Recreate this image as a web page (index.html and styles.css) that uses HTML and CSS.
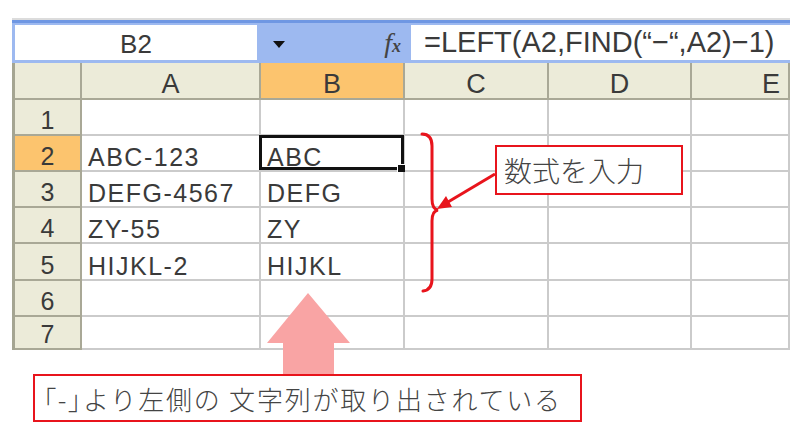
FILE: index.html
```html
<!DOCTYPE html>
<html lang="ja">
<head>
    <meta charset="UTF-8">
    <title>LEFT と FIND</title>
    <link rel="stylesheet" href="styles.css">
</head>
<body>

<div class="page">
    <div class="sheet">
        <div class="formula-bar">
            <div class="name-box">B2</div>
            <div class="bar-tools">
                <span class="drop"></span>
                <span class="fx">f<small>x</small></span>
            </div>
            <div class="formula">=LEFT(A2,FIND(“−“,A2)−1)</div>
        </div>

        <div class="grid">
            <div class="hd corner"></div>
            <div class="hd col">A</div>
            <div class="hd col sel">B</div>
            <div class="hd col">C</div>
            <div class="hd col">D</div>
            <div class="hd col e">E</div>

            <div class="hd row">1</div>
            <div class="cell"></div><div class="cell"></div><div class="cell"></div><div class="cell"></div><div class="cell"></div>

            <div class="hd row sel">2</div>
            <div class="cell">ABC-123</div>
            <div class="cell active">ABC<span class="handle"></span></div>
            <div class="cell"></div><div class="cell"></div><div class="cell"></div>

            <div class="hd row">3</div>
            <div class="cell">DEFG-4567</div>
            <div class="cell">DEFG</div>
            <div class="cell"></div><div class="cell"></div><div class="cell"></div>

            <div class="hd row">4</div>
            <div class="cell">ZY-55</div>
            <div class="cell">ZY</div>
            <div class="cell"></div><div class="cell"></div><div class="cell"></div>

            <div class="hd row">5</div>
            <div class="cell">HIJKL-2</div>
            <div class="cell">HIJKL</div>
            <div class="cell"></div><div class="cell"></div><div class="cell"></div>

            <div class="hd row">6</div>
            <div class="cell"></div><div class="cell"></div><div class="cell"></div><div class="cell"></div><div class="cell"></div>

            <div class="hd row">7</div>
            <div class="cell"></div><div class="cell"></div><div class="cell"></div><div class="cell"></div><div class="cell"></div>
        </div>
    </div>

    <div class="note"><span class="palt">「-」</span>より左側の 文字列が取り出されている</div>

    <!-- annotations drawn over the sheet -->
    <svg class="marks" width="800" height="438" viewBox="0 0 800 438">
        <polygon points="308,293 350,343 334,343 334,374 283,374 283,343 267,343" fill="#f9a4a4"/>
        <path d="M422,134 Q432,134 432,146 L432,199 Q432,209 438,210 Q432,211 432,221 L432,279 Q432,290 423,291"
              fill="none" stroke="#e8141c" stroke-width="3" stroke-linecap="round"/>
        <line x1="495" y1="174" x2="448" y2="202" stroke="#e8141c" stroke-width="3"/>
        <polygon points="437,209 452,207 446,196" fill="#e8141c"/>
    </svg>

    <div class="callout">数式を入力</div>
</div>

</body>
</html>
```

FILE: styles.css
```css
body {
    margin: 0;
    background: #fff;
    font-family: "Liberation Sans", "Noto Sans CJK JP", sans-serif;
    color: #3a3a3a;
}
.page {
    position: relative;
    width: 800px;
    height: 438px;
    overflow: hidden;
}
.sheet {
    width: 778px;
    margin: 18px 0 0 12px;
    border-top: 2px solid #dcdcdc;
}

/* formula bar */
.formula-bar {
    box-sizing: border-box;
    height: 43px;
    display: flex;
    padding: 2px 0 3px 3px;
    border-top: 3px solid #6f97e3;
    background: #9db9f0;
}
.name-box {
    width: 242px;
    background: #fff;
    font-size: 26px;
    text-align: center;
    line-height: 38px;
}
.bar-tools {
    width: 154px;
    display: flex;
    align-items: center;
    justify-content: space-between;
    padding: 0 10px 0 16px;
    box-sizing: border-box;
}
.drop {
    width: 0;
    height: 0;
    border-left: 6px solid transparent;
    border-right: 6px solid transparent;
    border-top: 7px solid #111;
    margin-top: 3px;
}
.fx {
    font-family: "Liberation Serif", serif;
    font-style: italic;
    font-size: 28px;
    color: #444;
}
.fx small {
    font-size: 18px;
    font-weight: bold;
}
.formula {
    flex: 1;
    background: #fff;
    font-size: 29px;
    line-height: 35px;
    padding-left: 13px;
    white-space: nowrap;
}

/* grid */
.grid {
    display: grid;
    grid-template-columns: 67px 179px 144px 144px 143px 98px;
    grid-template-rows: 37px 36px 36px 36px 36px 37px 36px 33px;
    border-left: 3px solid #a5a592;
}
.hd {
    box-sizing: border-box;
    background: #ecebd9;
    border-right: 2px solid #a9a896;
    border-bottom: 2px solid #a9a896;
    display: flex;
    align-items: flex-end;
    justify-content: center;
    line-height: 1;
}
.hd.col {
    font-size: 27px;
}
.hd.col.e {
    justify-content: flex-end;
    padding-right: 8px;
}
.hd.row {
    font-size: 25px;
    padding-bottom: 1px;
}
.hd.sel {
    background: #fcc46e;
}
.cell {
    position: relative;
    box-sizing: border-box;
    border-right: 2px solid #cbcbcb;
    border-bottom: 2px solid #cbcbcb;
    display: flex;
    align-items: flex-end;
    padding-left: 6px;
    font-size: 25px;
    line-height: 1;
    letter-spacing: 1.5px;
    white-space: nowrap;
}
.cell.active::before {
    content: "";
    position: absolute;
    left: -2px;
    top: -1px;
    right: -1px;
    bottom: 0;
    border: 3px solid #111;
}
.handle {
    position: absolute;
    right: -3px;
    bottom: -3px;
    width: 7px;
    height: 7px;
    background: #111;
    border: 1px solid #fff;
}

/* annotations */
.note {
    box-sizing: border-box;
    width: 549px;
    height: 48px;
    margin: 24px 0 0 33px;
    border: 2px solid #e8141c;
    display: flex;
    align-items: center;
    padding-left: 8px;
    font-family: "Noto Sans CJK JP", sans-serif;
    font-weight: 300;
    font-size: 26px;
    letter-spacing: 1.8px;
    color: #444;
    white-space: nowrap;
}
.palt {
    font-feature-settings: "palt";
}
.marks {
    position: absolute;
    left: 0;
    top: 0;
}
.callout {
    position: absolute;
    left: 495px;
    top: 145px;
    box-sizing: border-box;
    width: 188px;
    height: 50px;
    border: 2px solid #e8141c;
    background: #fff;
    display: flex;
    align-items: center;
    padding-left: 7px;
    font-family: "Noto Sans CJK JP", sans-serif;
    font-weight: 300;
    font-size: 28px;
    color: #444;
}
```
